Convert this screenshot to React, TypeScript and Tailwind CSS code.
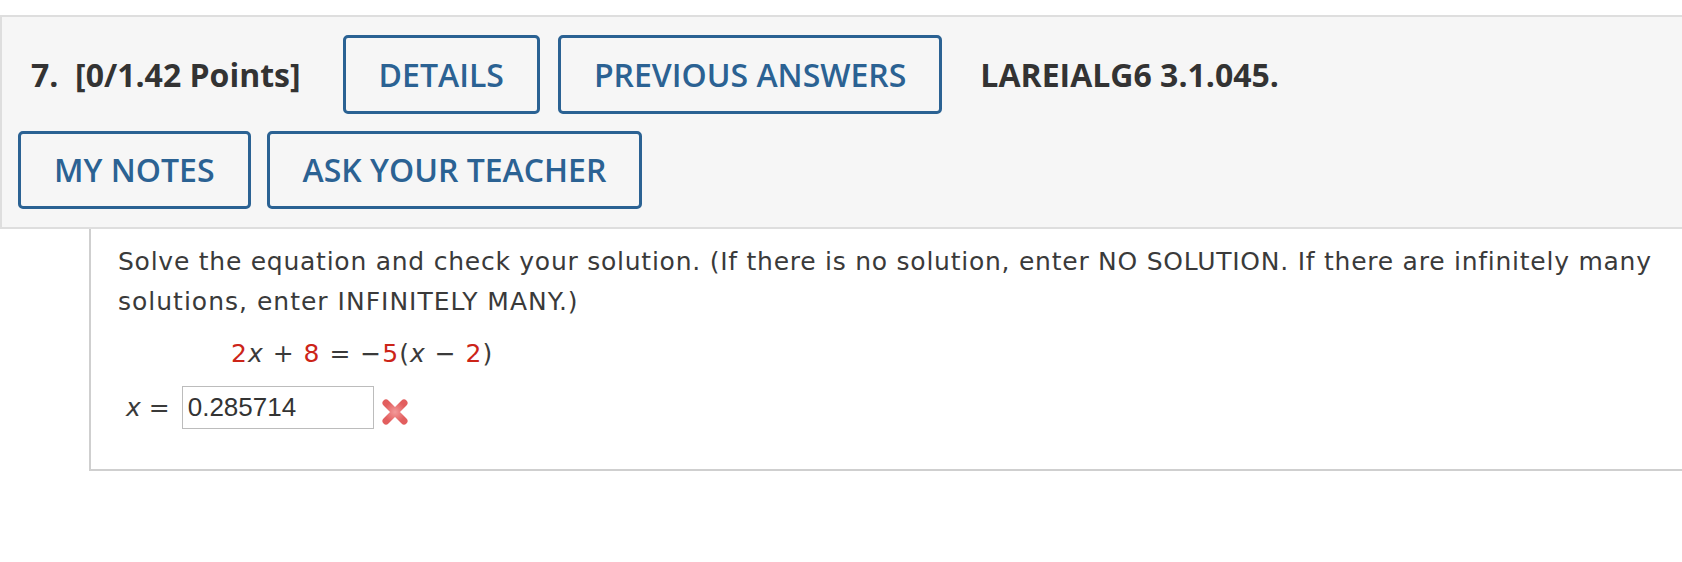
import React from "react";

const btn =
  "flex items-center justify-center px-[33px] border-[3px] border-[#2b6293] rounded-[5px] text-[#2b6293] text-[32px] font-semibold whitespace-nowrap";

function RedX() {
  return (
    <svg width="28" height="26" viewBox="0 0 28 26" className="ml-[7px] mt-[13px]">
      <defs>
        <radialGradient id="rg" cx="50%" cy="50%" r="60%">
          <stop offset="0%" stopColor="#f39a9a" />
          <stop offset="100%" stopColor="#e25e5e" />
        </radialGradient>
      </defs>
      <path d="M5 4 L23 22 M23 4 L5 22" stroke="url(#rg)" strokeWidth="7" strokeLinecap="round" fill="none" />
    </svg>
  );
}

export default function App() {
  return (
    <div className="w-[1682px] h-[562px] bg-white overflow-hidden pt-[15px]">
      <div className="bg-[#f6f6f6] border-2 border-r-0 border-[#dedede] pl-[16px] pt-[18px] pb-[18px] flex flex-col gap-[17px] font-['Open_Sans',sans-serif]">
        <div className="flex items-center">
          <div className="ml-[13px] mr-[42px] text-[32px] font-bold text-[#333] whitespace-nowrap">
            7.&nbsp; [0/1.42 Points]
          </div>
          <div className={btn + " h-[79px]"}>DETAILS</div>
          <div className={btn + " h-[79px] ml-[18px]"}>PREVIOUS ANSWERS</div>
          <div className="ml-[38px] text-[32px] font-bold text-[#333] whitespace-nowrap">
            LAREIALG6 3.1.045.
          </div>
        </div>
        <div className="flex items-center gap-[16px]">
          <div className={btn + " h-[78px]"}>MY NOTES</div>
          <div className={btn + " h-[78px]"}>ASK YOUR TEACHER</div>
        </div>
      </div>
      <div className="ml-[89px] border-l-2 border-b-2 border-[#cfcfcf] pl-[27px] pt-[13px] pb-[40px] font-['DejaVu_Sans',Verdana,sans-serif] text-[#3a3a3a]">
        <p className="text-[25px] tracking-[0.75px] leading-[40px] whitespace-nowrap">
          Solve the equation and check your solution. (If there is no solution, enter NO SOLUTION. If there are infinitely many
          <br />
          <span className="tracking-[1px]">solutions, enter INFINITELY MANY.)</span>
        </p>
        <div className="mt-[12px] ml-[113px] text-[25px] tracking-[1px] leading-[40px] whitespace-nowrap">
          <span className="text-[#cc2418]">2</span>
          <i>x</i> + <span className="text-[#cc2418]">8</span> = −<span className="text-[#cc2418]">5</span>(<i>x</i> − <span className="text-[#cc2418]">2</span>)
        </div>
        <div className="mt-[12px] ml-[8px] flex items-start">
          <div className="text-[25px] leading-[43px] whitespace-nowrap">
            <i>x</i> =
          </div>
          <div className="ml-[12px] w-[192px] h-[43px] border border-[#bcbcbc] bg-white flex items-center pl-[5px] font-['Liberation_Sans',Arial,sans-serif] text-[26px] text-[#333]">
            0.285714
          </div>
          <RedX />
        </div>
      </div>
    </div>
  );
}
